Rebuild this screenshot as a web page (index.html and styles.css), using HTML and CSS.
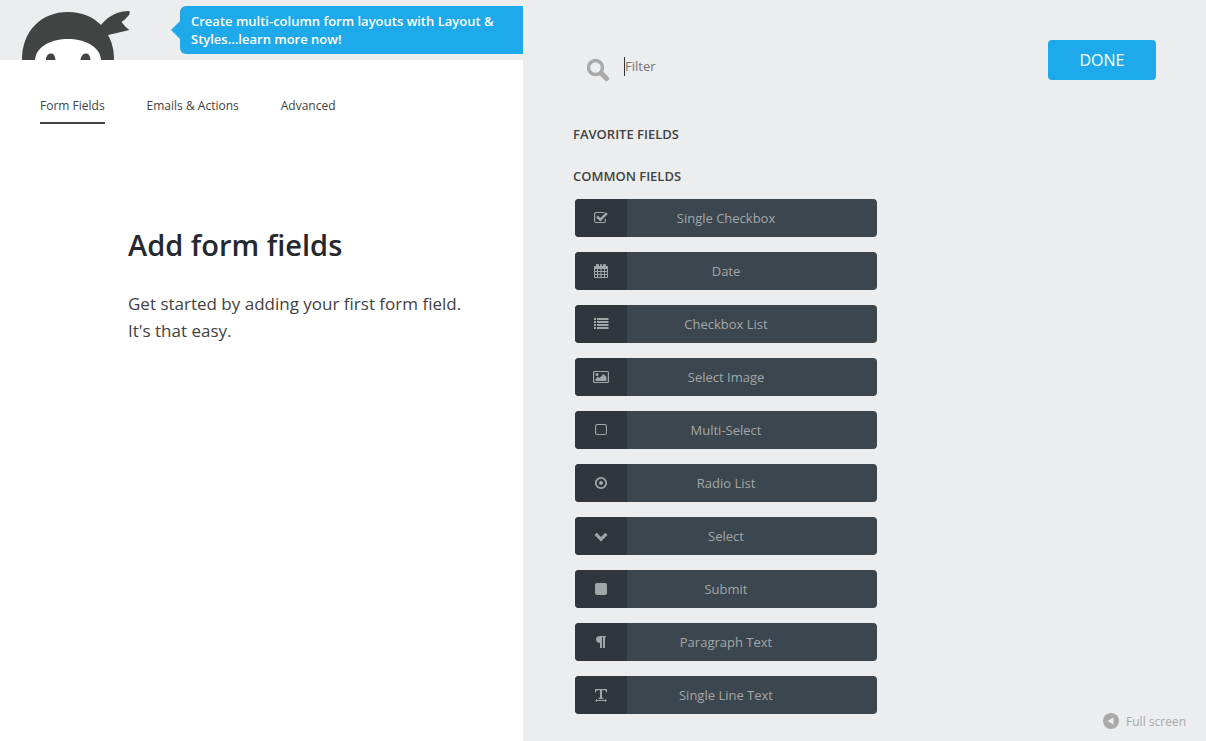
FILE: index.html
```html
<!DOCTYPE html>
<html lang="en">
<head>
<meta charset="utf-8">
<meta name="viewport" content="width=device-width, initial-scale=1">
<title>Form builder</title>
<link rel="stylesheet" href="styles.css">
</head>
<body>
<div class="builder">
  <div class="main">
    <header class="header">
      <svg class="logo" viewBox="0 0 108 49" role="img" aria-label="Ninja">
        <path fill="#424443" d="M0 49C0 20 19 1 46 1C60 1 71 6 79 14C87 4 97 0 107 0Q108.500 1 107 4Q104 8 99.500 11Q103 16 107.500 19C100 21 94 22 86 24C90 31 92 39 92 49Z"/>
        <path fill="#fff" d="M13 49C14 35 30 28 46 28S78 35 79 49Z"/>
        <path fill="#424443" d="M24 49C24 45 26 42.500 29 42.500S33 45 33.500 49ZM58.500 49C59 45 61 42.500 64 42.500S68 45 68.500 49Z"/>
      </svg>
      <a class="promo" href="#">Create multi-column form layouts with Layout &amp; Styles...learn more now!</a>
    </header>
    <nav class="tabs">
      <a class="tab tab-active" href="#">Form Fields</a>
      <a class="tab" href="#">Emails &amp; Actions</a>
      <a class="tab" href="#">Advanced</a>
    </nav>
    <section class="empty">
      <h1 class="empty-title">Add form fields</h1>
      <p class="empty-text">Get started by adding your first form field.<br>It's that easy.</p>
    </section>
  </div>
  <aside class="drawer">
    <div class="drawer-top">
      <label class="filter-label" for="filter" aria-label="Filter">
        <svg class="search-icon" viewBox="0 0 24 24" aria-hidden="true">
          <circle cx="9.500" cy="9.500" r="7" fill="none" stroke="#a9a9a9" stroke-width="3.400"/>
          <path d="M15.500 15.500L20.500 20.500" stroke="#a9a9a9" stroke-width="5" stroke-linecap="round"/>
        </svg>
      </label>
      <input class="filter" id="filter" type="text" placeholder="Filter">
      <button class="done" type="button">DONE</button>
    </div>
    <h2 class="group-title">FAVORITE FIELDS</h2>
    <h2 class="group-title">COMMON FIELDS</h2>
    <div class="fields">
      <button class="field" type="button"><span class="field-icon"><svg class="icon" viewBox="0 0 16 16"><path fill="none" stroke="currentColor" stroke-width="1.200" d="M12.400 9V11Q12.400 12.500 10.900 12.500H3.100Q1.600 12.500 1.600 11V4Q1.600 2.500 3.100 2.500H11.500"/><path fill="none" stroke="currentColor" stroke-width="2.500" d="M4 6.500L7.300 9.700L14 3.200"/></svg></span><span class="field-name">Single Checkbox</span></button>
      <button class="field" type="button"><span class="field-icon"><svg class="icon" viewBox="0 0 16 16"><path fill="currentColor" fill-rule="evenodd" d="M2 3H3V2Q3 1 4 1H5Q6 1 6 2V3H7V2Q7 1 8 1T9 2V3H10V2Q10 1 11 1H12Q13 1 13 2V3H14Q15 3 15 4V14Q15 15 14 15H2Q1 15 1 14V4Q1 3 2 3ZM2 6V8H4V6ZM5 6V8H7.500V6ZM8.500 6V8H11V6ZM12 6V8H14V6ZM2 9V11H4V9ZM5 9V11H7.500V9ZM8.500 9V11H11V9ZM12 9V11H14V9ZM2 12V14H4V12ZM5 12V14H7.500V12ZM8.500 12V14H11V12ZM12 12V14H14V12Z"/></svg></span><span class="field-name">Date</span></button>
      <button class="field" type="button"><span class="field-icon"><svg class="icon" viewBox="0 0 16 16"><path fill="currentColor" d="M1 2H3V4H1ZM4 2H15.500V4H4ZM1 5H3V7H1ZM4 5H15.500V7H4ZM1 8H3V10H1ZM4 8H15.500V10H4ZM1 11H3V13H1ZM4 11H15.500V13H4Z"/></svg></span><span class="field-name">Checkbox List</span></button>
      <button class="field" type="button"><span class="field-icon"><svg class="icon" viewBox="0 0 16 16"><rect x=".6" y="2.500" width="14.800" height="11" rx="1" fill="none" stroke="currentColor" stroke-width="1.200"/><circle cx="4" cy="5.500" r="1.500" fill="currentColor"/><path fill="currentColor" d="M2.500 12V10L5 7.500L6.500 9L10.500 5L13.500 8V12Z"/></svg></span><span class="field-name">Select Image</span></button>
      <button class="field" type="button"><span class="field-icon"><svg class="icon" viewBox="0 0 16 16"><rect x="2.600" y="2.500" width="10.800" height="10" rx="1.800" fill="none" stroke="currentColor" stroke-width="1.100"/></svg></span><span class="field-name">Multi-Select</span></button>
      <button class="field" type="button"><span class="field-icon"><svg class="icon" viewBox="0 0 16 16"><circle cx="8" cy="8" r="5.200" fill="none" stroke="currentColor" stroke-width="1.800"/><circle cx="8" cy="8" r="2" fill="currentColor"/></svg></span><span class="field-name">Radio List</span></button>
      <button class="field" type="button"><span class="field-icon"><svg class="icon" viewBox="0 0 16 16"><path fill="currentColor" d="M1.500 7L3.700 4.800L8 9L12.300 4.800L14.500 7L8 13.400Z"/></svg></span><span class="field-name">Select</span></button>
      <button class="field" type="button"><span class="field-icon"><svg class="icon" viewBox="0 0 16 16"><rect x="2" y="2" width="12" height="12" rx="2" fill="currentColor"/></svg></span><span class="field-name">Submit</span></button>
      <button class="field" type="button"><span class="field-icon"><svg class="icon" viewBox="0 0 16 16"><path fill="currentColor" d="M13 2V3.200H12V14H10V3.200H9V14H7V9C4.500 9 3 7.700 3 5.500S4.600 2 7.200 2Z"/></svg></span><span class="field-name">Paragraph Text</span></button>
      <button class="field" type="button"><span class="field-icon"><svg class="icon" viewBox="0 0 16 16"><path fill="currentColor" d="M2 2H14V5.500H13.200Q13 3.200 11.500 3.200H9V10.500L10.500 11V12H5.500V11L7 10.500V3.200H4.500Q3 3.200 2.800 5.500H2ZM2 13.500L4 12V13H12V12L14 13.500L12 15V14H4V15Z"/></svg></span><span class="field-name">Single Line Text</span></button>
    </div>
    <button class="fullscreen" type="button">
      <svg class="icon" viewBox="0 0 16 16" aria-hidden="true"><circle cx="8" cy="8" r="8" fill="currentColor"/><path fill="#ebedee" d="M4.500 8L10.500 4.500V11.500Z"/></svg>
      Full screen
    </button>
  </aside>
</div>
</body>
</html>
```
FILE: styles.css
```css
* {
  box-sizing: border-box;
}

body {
  margin: 0;
  background: #fff;
  color: #424242;
  font-family: "Segoe UI", "Open Sans", "Noto Sans", sans-serif;
  font-size: 13px;
}

button,
input {
  font-family: inherit;
}

.builder {
  display: grid;
  grid-template-columns: 523fr 683fr;
  min-height: 100vh;
}

.header {
  display: flex;
  align-items: center;
  gap: 50px;
  height: 60px;
  padding-left: 22px;
  background: #ebedee;
}

.logo {
  flex: none;
  align-self: flex-end;
  width: 108px;
  height: 49px;
}

.promo {
  position: relative;
  flex: 1;
  padding: 6px 24px 6px 11px;
  border-radius: 6px 0 0 6px;
  background: #1ea9ea;
  color: #fff;
  font-size: 13px;
  font-weight: 600;
  line-height: 18px;
  text-decoration: none;
}

.promo::before {
  content: "";
  position: absolute;
  top: 15px;
  left: -9px;
  border: solid transparent;
  border-width: 9px 9px 9px 0;
  border-right-color: #1ea9ea;
}

.tabs {
  display: flex;
  gap: 42px;
  padding: 36px 40px 0;
}

.tab {
  padding-bottom: 6px;
  border-bottom: 2px solid transparent;
  color: #424242;
  font-size: 12px;
  line-height: 20px;
  text-decoration: none;
}

.tab-active {
  border-color: #424242;
}

.empty {
  padding: 100px 20px 0 128px;
}

.empty-title {
  margin: 0 0 24px;
  color: #25292d;
  font-size: 29px;
  font-weight: 600;
  line-height: 42px;
}

.empty-text {
  margin: 0;
  font-size: 17px;
  line-height: 27px;
}

.drawer {
  position: relative;
  padding: 40px 20px 20px 50px;
  background: #ebedee;
}

.drawer-top {
  display: flex;
  align-items: flex-start;
  margin-bottom: 42px;
  padding: 0 30px 0 13px;
}

.filter-label {
  padding: 18px 14px 0 0;
}

.search-icon {
  display: block;
  width: 24px;
  height: 24px;
}

.filter {
  flex: 1;
  min-width: 0;
  height: 19px;
  margin: 17px 40px 0 0;
  padding: 0 0 2px;
  border: 0;
  border-left: 1px solid #333;
  outline: 0;
  background: transparent;
  font-size: 13px;
}

.filter::placeholder {
  color: #757575;
}

.done {
  width: 108px;
  height: 40px;
  padding: 0;
  border: 0;
  border-radius: 4px;
  background: #1ea9ea;
  color: #fff;
  font-size: 16px;
}

.group-title {
  margin: 0 0 22px;
  font-size: 13px;
  font-weight: 600;
  line-height: 20px;
}

.fields {
  display: grid;
  gap: 15px;
  width: 302px;
  margin: -9px 0 0 2px;
}

.field {
  display: grid;
  grid-template-columns: 52px 1fr 52px;
  align-items: center;
  height: 38px;
  padding: 0;
  overflow: hidden;
  border: 0;
  border-radius: 4px;
  background: #3c464e;
  color: #a3a6a9;
  font-size: 13px;
}

.field-icon {
  display: grid;
  place-items: center;
  height: 38px;
  background: #30363e;
}

.icon {
  display: block;
  width: 16px;
  height: 16px;
}

.fullscreen {
  position: absolute;
  right: 20px;
  bottom: 10px;
  display: flex;
  align-items: center;
  gap: 7px;
  height: 20px;
  padding: 0;
  border: 0;
  background: transparent;
  color: #a9a9a9;
  font-size: 12px;
}
```
